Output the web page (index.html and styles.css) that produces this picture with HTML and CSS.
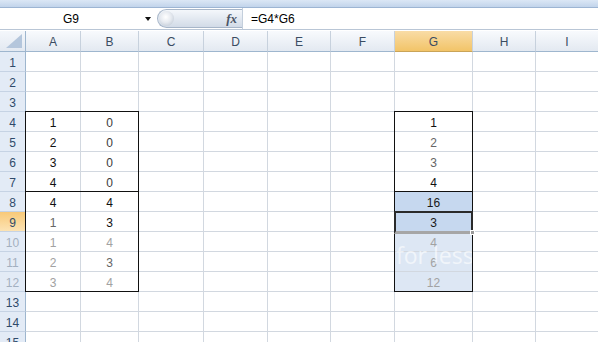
FILE: index.html
```html
<!DOCTYPE html>
<html>
<head>
<meta charset="utf-8">
<link rel="stylesheet" href="styles.css">
</head>
<body>
<div class="ribbon-edge"></div>
<div class="fbar">
  <div class="namebox">G9</div>
  <div class="nb-arrow"></div>
  <div class="pill"><span class="knob"></span><span class="fx">fx</span></div>
  <div class="formula">=G4*G6</div>
</div>
<div class="sheet-wrap">
<div class="sheet">
  <div class="corner"><svg width="16" height="14" viewBox="0 0 16 14"><polygon points="16,0 16,14 0,14" fill="#b4c6dc"/></svg></div>
  <div class="ch">A</div><div class="ch">B</div><div class="ch">C</div><div class="ch">D</div><div class="ch">E</div><div class="ch">F</div><div class="ch sel">G</div><div class="ch">H</div><div class="ch">I</div>

  <div class="rh">1</div><div class="c"></div><div class="c"></div><div class="c"></div><div class="c"></div><div class="c"></div><div class="c"></div><div class="c"></div><div class="c"></div><div class="c"></div>
  <div class="rh">2</div><div class="c"></div><div class="c"></div><div class="c"></div><div class="c"></div><div class="c"></div><div class="c"></div><div class="c"></div><div class="c"></div><div class="c"></div>
  <div class="rh">3</div><div class="c"></div><div class="c"></div><div class="c"></div><div class="c"></div><div class="c"></div><div class="c"></div><div class="c"></div><div class="c"></div><div class="c"></div>
  <div class="rh">4</div><div class="c">1</div><div class="c soft">0</div><div class="c"></div><div class="c"></div><div class="c"></div><div class="c"></div><div class="c">1</div><div class="c"></div><div class="c"></div>
  <div class="rh">5</div><div class="c">2</div><div class="c soft">0</div><div class="c"></div><div class="c"></div><div class="c"></div><div class="c"></div><div class="c mid">2</div><div class="c"></div><div class="c"></div>
  <div class="rh">6</div><div class="c">3</div><div class="c soft">0</div><div class="c"></div><div class="c"></div><div class="c"></div><div class="c"></div><div class="c mid">3</div><div class="c"></div><div class="c"></div>
  <div class="rh">7</div><div class="c">4</div><div class="c soft">0</div><div class="c"></div><div class="c"></div><div class="c"></div><div class="c"></div><div class="c">4</div><div class="c"></div><div class="c"></div>
  <div class="rh">8</div><div class="c">4</div><div class="c">4</div><div class="c"></div><div class="c"></div><div class="c"></div><div class="c"></div><div class="c hi">16</div><div class="c"></div><div class="c"></div>
  <div class="rh sel">9</div><div class="c mid">1</div><div class="c">3</div><div class="c"></div><div class="c"></div><div class="c"></div><div class="c"></div><div class="c hi">3</div><div class="c"></div><div class="c"></div>
  <div class="rh fade">10</div><div class="c fade">1</div><div class="c fade">4</div><div class="c"></div><div class="c"></div><div class="c"></div><div class="c"></div><div class="c lo fade">4</div><div class="c"></div><div class="c"></div>
  <div class="rh fade">11</div><div class="c fade">2</div><div class="c mid">3</div><div class="c"></div><div class="c"></div><div class="c"></div><div class="c"></div><div class="c lo fade">6</div><div class="c"></div><div class="c"></div>
  <div class="rh fade">12</div><div class="c fade">3</div><div class="c fade">4</div><div class="c"></div><div class="c"></div><div class="c"></div><div class="c"></div><div class="c lo fade">12</div><div class="c"></div><div class="c"></div>
  <div class="rh">13</div><div class="c"></div><div class="c"></div><div class="c"></div><div class="c"></div><div class="c"></div><div class="c"></div><div class="c"></div><div class="c"></div><div class="c"></div>
  <div class="rh">14</div><div class="c"></div><div class="c"></div><div class="c"></div><div class="c"></div><div class="c"></div><div class="c"></div><div class="c"></div><div class="c"></div><div class="c"></div>
  <div class="rh">15</div><div class="c"></div><div class="c"></div><div class="c"></div><div class="c"></div><div class="c"></div><div class="c"></div><div class="c"></div><div class="c"></div><div class="c"></div>
</div>
<div class="overlay">
  <div class="box box-ab-top"></div>
  <div class="box box-ab-bot"></div>
  <div class="box box-g-top"></div>
  <div class="box box-g-bot"></div>
  <div class="active"><span class="handle"></span></div>
  <span class="wm">for less</span>
</div>
</div>
</body>
</html>
```
FILE: styles.css
```css
* { box-sizing: border-box; }
body {
  margin: 0;
  width: 598px;
  height: 342px;
  overflow: hidden;
  background: #fff;
  font-family: "Liberation Sans", Arial, sans-serif;
}
.ribbon-edge {
  height: 8px;
  background: linear-gradient(#dbe7f5, #c2d4eb);
  border-bottom: 1px solid #9db5d3;
}
.fbar {
  display: flex;
  align-items: center;
  height: 22px;
  border-bottom: 1px solid #b9c6d6;
  font-size: 12px;
  color: #000;
}
.namebox {
  width: 142px;
  text-align: center;
}
.nb-arrow {
  width: 0;
  height: 0;
  border-left: 3.5px solid transparent;
  border-right: 3.5px solid transparent;
  border-top: 4px solid #111;
  margin-left: 3px;
}
.pill {
  margin-left: 6px;
  width: 85px;
  height: 19px;
  border: 1px solid #a7b6c9;
  border-right: none;
  border-radius: 10px 0 0 10px;
  background: linear-gradient(#f4f7fb, #d2dbe7);
  display: flex;
  align-items: center;
  justify-content: space-between;
  padding: 0 5px 0 1px;
}
.knob {
  width: 15px;
  height: 15px;
  border-radius: 50%;
  background: radial-gradient(circle at 45% 40%, #ffffff 0, #e6eaf0 45%, #b4bfcc 100%);
}
.fx {
  font-family: "Liberation Serif", serif;
  font-style: italic;
  font-weight: bold;
  font-size: 13px;
  color: #4b5566;
}
.formula {
  height: 100%;
  display: flex;
  align-items: center;
  border-left: 1px solid #c4cfdc;
  padding-left: 8px;
}
.sheet-wrap {
  display: grid;
  margin-top: 1px;
}
.sheet, .overlay {
  grid-area: 1 / 1;
  display: grid;
  grid-template-columns: 26px 55px 58px 65px 64px 63px 64px 78px 63px 63px;
  grid-template-rows: 21px repeat(15, 20px);
}
.sheet { font-size: 12px; }
.overlay { position: relative; pointer-events: none; }
.corner {
  background: linear-gradient(#f4f7fb, #e3e9f1);
  border-right: 1px solid #9eb6ce;
  border-bottom: 1px solid #9eb6ce;
  display: flex;
  align-items: flex-end;
  justify-content: flex-end;
  padding: 0 3px 3px 0;
}
.corner svg { display: block; }
.ch {
  background: linear-gradient(#f8fafd, #e3e9f1);
  border-right: 1px solid #c7d1dd;
  border-bottom: 1px solid #9eb6ce;
  color: #3a4c62;
  display: flex;
  align-items: center;
  justify-content: center;
  padding-top: 1px;
}
.ch.sel {
  background: linear-gradient(#f9dca6, #f2c468);
  border-bottom-color: #c9a458;
}
.rh {
  background: #e3ebf6;
  border-right: 1px solid #9eb6ce;
  border-bottom: 1px solid #c6d3e4;
  color: #2f4a6a;
  display: flex;
  align-items: center;
  justify-content: center;
  padding-top: 2px;
}
.rh.sel {
  background: linear-gradient(#f8c978, #fce3b4);
}
.rh.fade { color: #a3b0c0; }
.c {
  border-right: 1px solid #d2d8e0;
  border-bottom: 1px solid #d2d8e0;
  display: flex;
  align-items: center;
  justify-content: center;
  padding-top: 3px;
  color: #111;
}
.c.soft { color: #3a3a3a; }
.c.mid { color: #666; }
.c.fade { color: #a2a2a2; }
.c.hi { background: #c6d8ef; color: #1a1a1a; }
.c.lo { background: #dde7f4; }
.box {
  border: 1px solid #111;
  margin: -1px 0 0 -1px;
}
.box-ab-top { grid-column: 2 / 4; grid-row: 5 / 9; }
.box-ab-bot { grid-column: 2 / 4; grid-row: 9 / 14; }
.box-g-top { grid-column: 8 / 9; grid-row: 5 / 9; }
.box-g-bot { grid-column: 8 / 9; grid-row: 9 / 14; }
.active {
  grid-column: 8 / 9;
  grid-row: 10 / 11;
  position: relative;
  margin: -1px 0 -2px -1px;
  border-top: 2px solid #2a2a2a;
  border-left: 2px solid #2a2a2a;
  border-right: 2px solid #2a2a2a;
  border-bottom: 3px solid #a6a6a6;
}
.handle {
  position: absolute;
  right: -4px;
  bottom: -4px;
  width: 5px;
  height: 5px;
  background: #9a9a9a;
  border: 1px solid #fff;
}
.wm {
  position: absolute;
  left: 396px;
  top: 208px;
  width: 76px;
  overflow: hidden;
  white-space: nowrap;
  font-family: "Open Sans", "Liberation Sans", sans-serif;
  font-size: 23px;
  color: rgba(255, 255, 255, 0.6);
}
```
